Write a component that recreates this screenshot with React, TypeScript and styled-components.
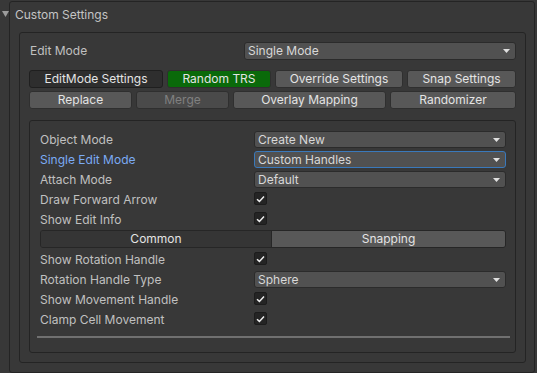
import styled, { createGlobalStyle } from "styled-components";

const GlobalStyle = createGlobalStyle`
    html, body {
        margin: 0;
        padding: 0;
        background: #383838;
        font-family: Inter, "Noto Sans", sans-serif;
        font-size: 12px;
        color: #c4c4c4;
    }
`;

const Page = styled.div`
    display: grid;
    grid-template-columns: 9px 526px;
    padding-top: 1px;
    height: 373px;
    overflow: hidden;
`;

const FoldArrow = styled.div`
    padding: 10px 0 0 2px;
    line-height: 0;
`;

const Foldout = styled.div`
    border: 1px solid #242424;
    border-radius: 3px;
    background: #383838;
    padding: 0 8px 9px 0;
    height: 372px;
    box-sizing: border-box;
`;

const FoldTitle = styled.div`
    height: 30px;
    line-height: 25px;
    padding-left: 5px;
    color: #c4c4c4;
`;

const Box = styled.div<{ $inner?: boolean }>`
    border: 1px solid #242424;
    border-radius: 3px;
    display: flex;
    flex-direction: column;
    padding: ${(p) => (p.$inner ? "10px 9px 14px 10px" : "9px 9px 9px 9px")};
    margin-left: ${(p) => (p.$inner ? 0 : 9)}px;
    gap: 2px;
`;

const Row = styled.div<{ $indent?: number }>`
    display: grid;
    grid-template-columns: 214px 1fr;
    align-items: start;
    height: 18px;
    padding-left: ${(p) => p.$indent ?? 0}px;
`;

const Label = styled.div<{ $focus?: boolean }>`
    line-height: 18px;
    color: ${(p) => (p.$focus ? "#7babf4" : "#c0c0c0")};
    white-space: nowrap;
`;

const Popup = styled.div<{ $focus?: boolean; $h?: number }>`
    position: relative;
    height: ${(p) => p.$h ?? 17}px;
    line-height: ${(p) => (p.$h ?? 17) - 2}px;
    box-sizing: border-box;
    border: 1px solid ${(p) => (p.$focus ? "#3a79bb" : "#2b2b2b")};
    border-radius: 3px;
    background: #515151;
    color: #d8d8d8;
    padding-left: 3px;

    svg {
        position: absolute;
        right: 5px;
        top: 6px;
    }
`;

const ButtonRow = styled.div<{ $top: number }>`
    display: flex;
    gap: 4px;
    margin-top: ${(p) => p.$top}px;
`;

type Tone = "normal" | "active" | "green" | "disabled";

const toneBg: Record<Tone, string> = {
    normal: "#585858",
    active: "#2e2e2e",
    green: "#0a6a0a",
    disabled: "#4a4a4a",
};

const Button = styled.div<{ $w: number; $tone: Tone }>`
    width: ${(p) => p.$w}px;
    height: 18px;
    box-sizing: border-box;
    border: 1px solid ${(p) => (p.$tone === "active" ? "#1f1f1f" : "#2f2f2f")};
    border-radius: 3px;
    background: ${(p) => toneBg[p.$tone]};
    color: ${(p) => (p.$tone === "disabled" ? "#808080" : "#e4e4e4")};
    text-align: center;
    line-height: 16px;
    white-space: nowrap;
`;

const Inner = styled(Box)`
    margin-top: 9px;
`;

const Tabs = styled.div`
    display: flex;
    height: 18px;
    margin: -1px 0 1px;
    border: 1px solid #262626;
    border-radius: 3px;
    overflow: hidden;
    box-sizing: border-box;
`;

const Tab = styled.div<{ $on?: boolean }>`
    flex: ${(p) => (p.$on ? "0 0 230px" : "1")};
    background: ${(p) => (p.$on ? "#353535" : "#585858")};
    border-right: ${(p) => (p.$on ? "1px solid #262626" : "none")};
    color: #e4e4e4;
    text-align: center;
    line-height: 16px;
`;

const Toggle = styled.div`
    width: 13px;
    height: 13px;
    margin-top: 1px;
    box-sizing: border-box;
    border: 1px solid #1c1c1c;
    border-radius: 2px;
    background: #242424;
    display: flex;
    align-items: center;
    justify-content: center;
`;

const Separator = styled.div`
    height: 2px;
    background: #707070;
    margin: 5px -4px 0 -3px;
`;

function Arrow() {
    return (
        <svg width="7" height="4" viewBox="0 0 7 4">
            <path d="M0 0 H7 L3.5 4 Z" fill="#e0e0e0" />
        </svg>
    );
}

function Check() {
    return (
        <Toggle>
            <svg width="9" height="8" viewBox="0 0 9 8">
                <path d="M1 4.2 L3.4 6.4 L8 1.4" fill="none" stroke="#ececec" strokeWidth="1.5" />
            </svg>
        </Toggle>
    );
}

function Field({ label, value, focus }: { label: string; value: string; focus?: boolean }) {
    return (
        <Row>
            <Label $focus={focus}>{label}</Label>
            <Popup $focus={focus}>
                {value}
                <Arrow />
            </Popup>
        </Row>
    );
}

function ToggleRow({ label }: { label: string }) {
    return (
        <Row>
            <Label>{label}</Label>
            <Check />
        </Row>
    );
}

export default function App() {
    return (
        <>
            <GlobalStyle />
            <Page>
                <FoldArrow>
                    <svg width="7" height="6" viewBox="0 0 7 6">
                        <path d="M0 0 H7 L3.5 6 Z" fill="#9c9c9c" />
                    </svg>
                </FoldArrow>
                <Foldout>
                    <FoldTitle>Custom Settings</FoldTitle>
                    <Box>
                        <Row $indent={1}>
                            <Label>Edit Mode</Label>
                            <Popup $h={18}>
                                Single Mode
                                <Arrow />
                            </Popup>
                        </Row>
                        <ButtonRow $top={8}>
                            <Button $w={134} $tone="active">EditMode Settings</Button>
                            <Button $w={104} $tone="green">Random TRS</Button>
                            <Button $w={128} $tone="normal">Override Settings</Button>
                            <Button $w={109} $tone="normal">Snap Settings</Button>
                        </ButtonRow>
                        <ButtonRow $top={1}>
                            <Button $w={103} $tone="normal">Replace</Button>
                            <Button $w={93} $tone="disabled">Merge</Button>
                            <Button $w={153} $tone="normal">Overlay Mapping</Button>
                            <Button $w={126} $tone="normal">Randomizer</Button>
                        </ButtonRow>
                        <Inner $inner>
                            <Field label="Object Mode" value="Create New" />
                            <Field label="Single Edit Mode" value="Custom Handles" focus />
                            <Field label="Attach Mode" value="Default" />
                            <ToggleRow label="Draw Forward Arrow" />
                            <ToggleRow label="Show Edit Info" />
                            <Tabs>
                                <Tab $on>Common</Tab>
                                <Tab>Snapping</Tab>
                            </Tabs>
                            <ToggleRow label="Show Rotation Handle" />
                            <Field label="Rotation Handle Type" value="Sphere" />
                            <ToggleRow label="Show Movement Handle" />
                            <ToggleRow label="Clamp Cell Movement" />
                            <Separator />
                        </Inner>
                    </Box>
                </Foldout>
            </Page>
        </>
    );
}
